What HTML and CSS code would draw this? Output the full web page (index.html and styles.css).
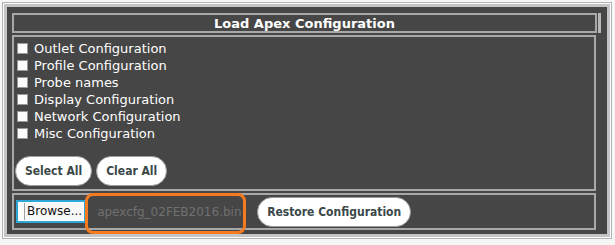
FILE: index.html
```html
<!DOCTYPE html>
<html>
<head>
<meta charset="utf-8">
<link rel="stylesheet" href="styles.css">
</head>
<body>
<div class="frame">
  <div class="inner">
    <div class="head-row">
      <div class="cell head">Load Apex Configuration</div>
      <div class="scroll"></div>
    </div>
    <div class="cell body">
      <ul class="opts">
        <li><input type="checkbox" class="cb"><span>Outlet Configuration</span></li>
        <li><input type="checkbox" class="cb"><span>Profile Configuration</span></li>
        <li><input type="checkbox" class="cb"><span>Probe names</span></li>
        <li><input type="checkbox" class="cb"><span>Display Configuration</span></li>
        <li><input type="checkbox" class="cb"><span>Network Configuration</span></li>
        <li><input type="checkbox" class="cb"><span>Misc Configuration</span></li>
      </ul>
      <div class="btns">
        <button class="pill">Select All</button>
        <button class="pill">Clear All</button>
      </div>
    </div>
    <div class="cell foot">
      <span class="browse"><span class="browse-in">Browse...</span></span>
      <span class="fname">apexcfg_02FEB2016.bin</span>
      <button class="pill restore">Restore Configuration</button>
    </div>
  </div>
</div>
</body>
</html>
```
FILE: styles.css
```css
html, body {
  margin: 0;
  padding: 0;
  background: #f6f6f6;
}
body {
  width: 615px;
  height: 245px;
  overflow: hidden;
  font-family: "DejaVu Sans", Verdana, sans-serif;
}
.frame {
  margin: 2px 0 0 2px;
  width: 606px;
  border: 1px solid #b4b4b4;
  padding: 1px;
  background: #fafafa;
}
.inner {
  background: #464646;
  border: 3px solid #c4c4c4;
  padding: 6px 6px 4px 5px;
  display: flex;
  flex-direction: column;
  gap: 2px;
}
.head-row {
  display: flex;
  align-items: stretch;
  gap: 1px;
}
.cell {
  border: 2px solid #a8a8a8;
  box-sizing: border-box;
}
.head {
  flex: 1;
  height: 20px;
  color: #ffffff;
  font-weight: bold;
  font-size: 13px;
  text-align: center;
  line-height: 17px;
}
.scroll {
  width: 3px;
  background: #b8b8b8;
}
.body {
  margin-right: 5px;
  height: 156px;
  padding: 3px 0 0 1px;
}
.opts {
  list-style: none;
  margin: 0;
  padding: 0;
}
.opts li {
  display: flex;
  align-items: center;
  height: 17px;
  color: #ffffff;
  font-size: 13px;
}
.cb {
  appearance: none;
  -webkit-appearance: none;
  width: 11px;
  height: 11px;
  margin: 0 6px 0 2px;
  background: #fdfdfd;
  border: 1px solid #9a9a9a;
  border-radius: 0;
  box-sizing: border-box;
}
.btns {
  display: flex;
  gap: 4px;
  margin-top: 14px;
}
.pill {
  font-family: "DejaVu Sans Condensed", "DejaVu Sans", Verdana, sans-serif;
  font-stretch: condensed;
  font-size: 12px;
  font-weight: bold;
  color: #3b4848;
  background: #ffffff;
  border: 1px solid #9c9c9c;
  border-radius: 15px;
  height: 30px;
  padding: 0 9px;
}
.foot {
  margin-right: 5px;
  height: 37px;
  display: flex;
  align-items: center;
  padding-left: 2px;
}
.browse {
  display: inline-block;
  border: 2px solid #2ea6d8;
  background: #ffffff;
  height: 23px;
  box-sizing: border-box;
  padding: 1px 1px 1px 6px;
}
.browse-in {
  display: block;
  height: 17px;
  border-left: 1px solid #a0a0a0;
  padding: 0 1px 0 2px;
  font-size: 12px;
  line-height: 17px;
  color: #111;
  background: #f8f8f8;
}
.fname {
  position: relative;
  margin-left: 11px;
  font-size: 12px;
  color: #707070;
  width: 150px;
  line-height: 14px;
}
.fname::after {
  content: "";
  position: absolute;
  left: -12px;
  top: -12px;
  width: 155px;
  height: 35px;
  border: 3px solid #f47b20;
  border-radius: 8px;
}
.restore {
  margin-left: 10px;
}
```
